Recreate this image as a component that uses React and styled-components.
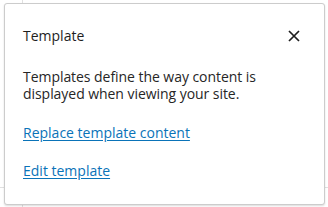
import React from "react";
import styled, { createGlobalStyle } from "styled-components";

const Global = createGlobalStyle`
  html, body { margin: 0; padding: 0; background: #fff; }
  body { font-family: "Open Sans", "Noto Sans", sans-serif; }
`;

const Canvas = styled.div`
  position: relative;
  width: 328px;
  height: 207px;
  overflow: hidden;
  background: #fff;
`;

const GuideV = styled.div`
  position: absolute;
  left: 22px;
  top: 0;
  bottom: 0;
  width: 1px;
  background: #e0e0e0;
`;

const GuideH = styled.div`
  position: absolute;
  left: 0;
  right: 0;
  top: 187px;
  height: 1px;
  background: #e0e0e0;
`;

const Popover = styled.div`
  position: absolute;
  left: 4px;
  top: 3px;
  width: 321px;
  height: 202px;
  box-sizing: border-box;
  background: #fff;
  border: 1px solid #cccccc;
  border-radius: 3px;
  box-shadow: 0 1px 2px rgba(0, 0, 0, 0.14);
  padding: 20px 18px 0 18px;
  display: flex;
  flex-direction: column;
  color: #1e1e1e;
  font-size: 14px;
`;

const Header = styled.div`
  display: flex;
  align-items: center;
  justify-content: space-between;
  height: 24px;
  line-height: 24px;
`;

const Title = styled.h2`
  margin: 0;
  font-size: 14px;
  font-weight: 400;
  color: #1e1e1e;
  line-height: 24px;
`;

const Close = styled.button`
  border: 0;
  background: none;
  padding: 0;
  width: 24px;
  height: 24px;
  display: flex;
  align-items: center;
  justify-content: center;
  color: #1e1e1e;
`;

const Body = styled.p`
  margin: 20px 0 0 0;
  line-height: 17px;
  letter-spacing: -0.05px;
  color: #262626;
`;

const Link = styled.a`
  color: #0a73b8;
  text-decoration: underline;
  text-underline-offset: 2px;
  line-height: 17px;
  margin-top: ${(p) => p.$mt}px;
  align-self: flex-start;
`;

export default function App() {
  return (
    <Canvas>
      <Global />
      <GuideV />
      <GuideH />
      <Popover>
        <Header>
          <Title>Template</Title>
          <Close aria-label="Close">
            <svg width="24" height="24" viewBox="0 0 24 24">
              <path
                d="M7 7 L17 17 M17 7 L7 17"
                stroke="#1e1e1e"
                strokeWidth="1.7"
                fill="none"
              />
            </svg>
          </Close>
        </Header>
        <Body>
          Templates define the way content is
          <br />
          displayed when viewing your site.
        </Body>
        <Link href="#" $mt={22}>Replace template content</Link>
        <Link href="#" $mt={21}>Edit template</Link>
      </Popover>
    </Canvas>
  );
}
